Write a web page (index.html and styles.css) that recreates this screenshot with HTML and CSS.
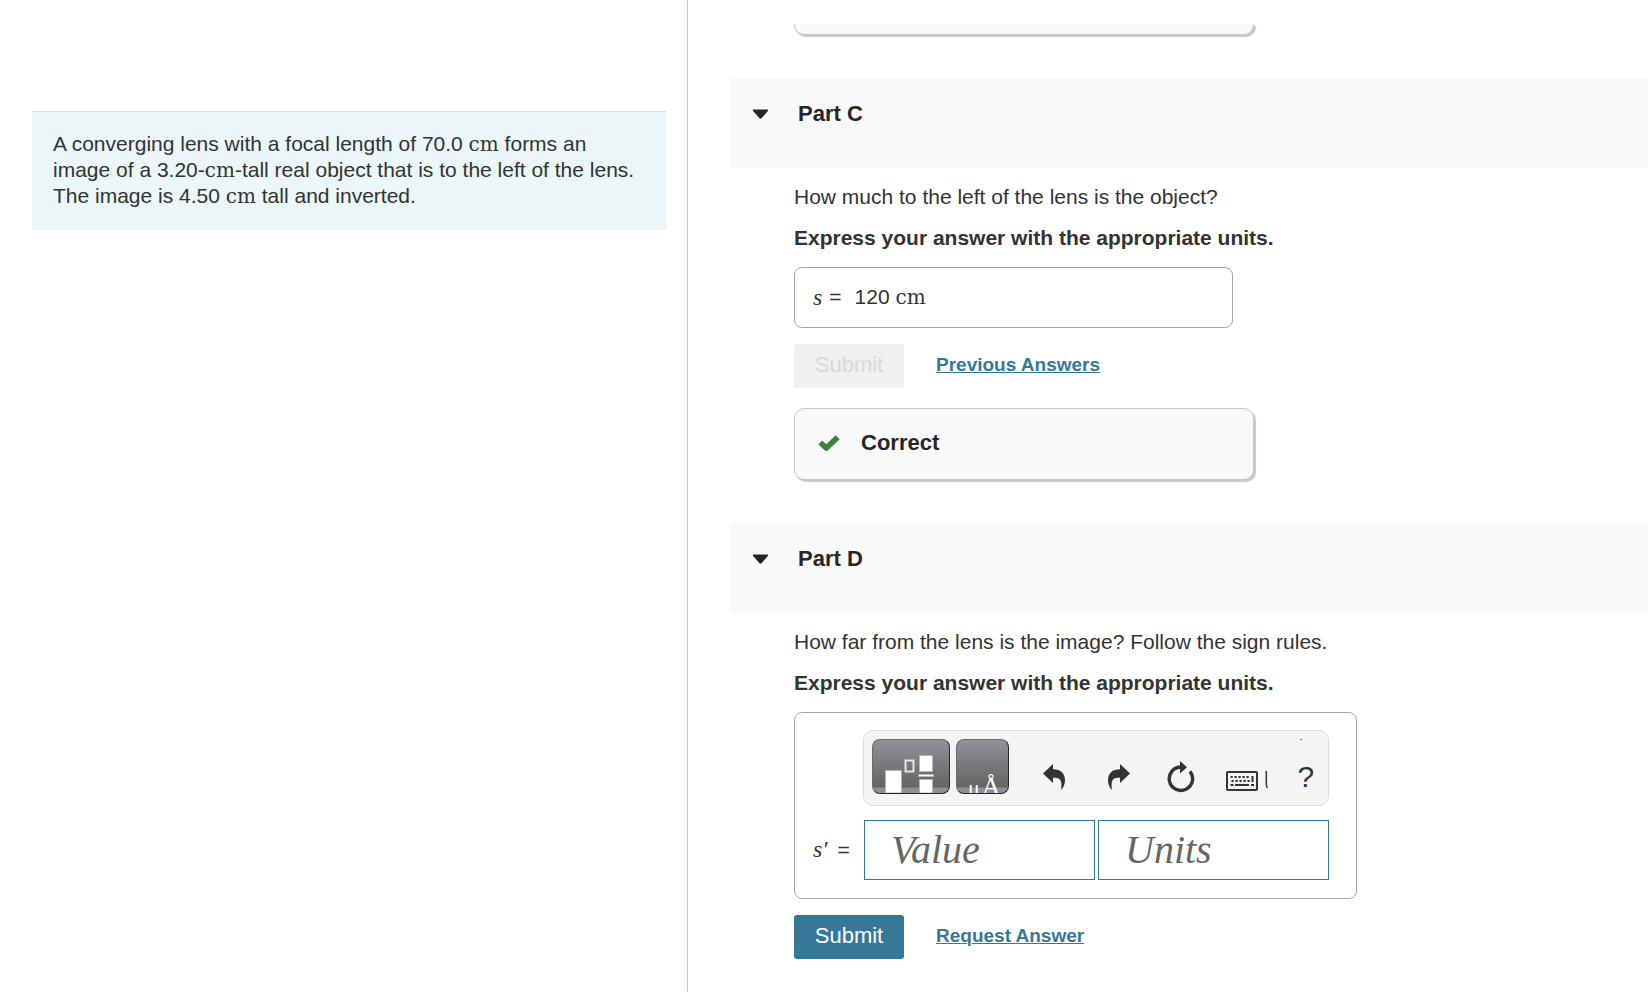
FILE: index.html
```html
<!DOCTYPE html>
<html lang="en">
<head>
<meta charset="utf-8">
<title>Converging lens problem</title>
<link rel="stylesheet" href="styles.css">
</head>
<body>
<div class="layout">
  <aside class="problem">
    <p class="problem-text">A converging lens with a focal length of 70.0 <span class="unit">cm</span> forms an image of a 3.20-<span class="unit">cm</span>-tall real object that is to the left of the lens. The image is 4.50 <span class="unit">cm</span> tall and inverted.</p>
  </aside>
  <main class="parts">
    <div class="feedback feedback-tail"></div>

    <section class="part">
      <header class="part-header">
        <svg class="caret" viewBox="0 0 17 10" aria-hidden="true"><path d="M1.5 0.5h14q1.2.5.4 1.500L9.500 9.200q-1 .9-2 0L1.100 2Q.3 1 1.500.5z"/></svg>
        <h2 class="part-title">Part C</h2>
      </header>
      <div class="part-body">
        <p class="question">How much to the left of the lens is the object?</p>
        <p class="instruction">Express your answer with the appropriate units.</p>
        <div class="answer"><i class="var">s</i><span>=</span><span class="answer-value">120 <span class="unit">cm</span></span></div>
        <div class="actions">
          <button class="submit" type="button" disabled>Submit</button>
          <a class="link" href="#previous">Previous Answers</a>
        </div>
        <div class="feedback">
          <svg class="check" viewBox="0 0 22 17" aria-hidden="true"><path d="M2.300 7.500L8.300 13 19.700 2.300" fill="none" stroke="#37833f" stroke-width="5.600" stroke-linejoin="round"/></svg>
          <strong class="feedback-text">Correct</strong>
        </div>
      </div>
    </section>

    <section class="part">
      <header class="part-header">
        <svg class="caret" viewBox="0 0 17 10" aria-hidden="true"><path d="M1.5 0.5h14q1.2.5.4 1.500L9.500 9.200q-1 .9-2 0L1.100 2Q.3 1 1.500.5z"/></svg>
        <h2 class="part-title">Part D</h2>
      </header>
      <div class="part-body">
        <p class="question">How far from the lens is the image? Follow the sign rules.</p>
        <p class="instruction">Express your answer with the appropriate units.</p>
        <form class="entry">
          <div class="toolbar">
            <button class="palette palette-templates" type="button" aria-label="Templates">
              <svg viewBox="0 0 76 53" width="76" height="53" aria-hidden="true">
                <g fill="#fff" stroke="#b5b5ba" stroke-width="1"><path d="M12.500 30.500h16V53h-16zM46.500 15.500h13v16h-13zM46.500 39.500h13V53h-13zM45.500 34.500h15v2h-15z"/></g>
                <path d="M32.500 20.500h8v11h-8z" fill="none" stroke="#e6e6ea" stroke-width="2"/>
              </svg>
            </button>
            <button class="palette palette-symbols" type="button" aria-label="Symbols"><span>μ</span><span class="angstrom">Å</span></button>
            <div class="tools">
              <button class="tool" type="button" aria-label="Undo"><svg width="22" height="26" viewBox="0 0 22 26"><path d="M0 9.500L10 0v5.200C17 5 22 9 22 16q0 6-4 10Q19.500 18 16.500 15 14 13.500 10 13.800V19z"/></svg></button>
              <button class="tool" type="button" aria-label="Redo"><svg width="22" height="26" viewBox="0 0 22 26"><path d="M22 9.500L12 0v5.200C5 5 0 9 0 16q0 6 4 10Q2.500 18 5.500 15 8 13.500 12 13.800V19z"/></svg></button>
              <button class="tool" type="button" aria-label="Reset"><svg width="28" height="32" viewBox="0 0 28 32"><path d="M14 6A11.700 11.700 0 1 0 23 10.300" fill="none" stroke="#333" stroke-width="3.400"/><path d="M13 0l7 6.300-7 6.300z"/></svg></button>
              <button class="tool" type="button" aria-label="Keyboard shortcuts"><svg width="42" height="28" viewBox="0 -8 42 28"><path d="M2 1h28q1 0 1 1v16q0 1-1 1H2q-1 0-1-1V2q0-1 1-1z" fill="none" stroke="#333" stroke-width="2"/><path d="M4.500 6h20M5.500 10h20" fill="none" stroke="#333" stroke-width="2" stroke-dasharray="2.200 1.800"/><path d="M4.500 14h3M9 14h14M25 14h3M26.500 5v6" fill="none" stroke="#333" stroke-width="2"/><path d="M40.300 0v12q0 3 1 5" fill="none" stroke="#333" stroke-width="1.500"/></svg></button>
              <button class="tool tool-help" type="button" aria-label="Help">?</button>
            </div>
          </div>
          <label class="entry-label" for="value"><span><i class="var">s</i><i class="var">′</i></span><span>=</span></label>
          <div class="fields">
            <input class="field" id="value" type="text" placeholder="Value" aria-label="Value">
            <input class="field" type="text" placeholder="Units" aria-label="Units">
          </div>
        </form>
        <div class="actions">
          <button class="submit" type="button">Submit</button>
          <a class="link" href="#request">Request Answer</a>
        </div>
      </div>
    </section>
  </main>
</div>
</body>
</html>
```
FILE: styles.css
```css
* { box-sizing: border-box; }

body {
  margin: 0;
  background: #fff;
  color: #333;
  font: 21px/26px "Liberation Sans", Arial, sans-serif;
}

h2, p { margin: 0; }

.layout {
  display: grid;
  grid-template-columns: 43fr 60fr;
  min-height: 100vh;
}

.problem {
  padding: 111px 21px 0 32px;
  border-right: 1px solid #bccbd8;
}

.problem-text {
  padding: 19px 28px 21px 21px;
  border-top: 1px solid #d5dfe3;
  background: #eaf6f8;
}

.unit {
  font-family: "DejaVu Serif", serif;
  font-size: 20px;
  line-height: 20px;
}

.var {
  font-family: "Liberation Serif", "Times New Roman", serif;
  font-size: 24px;
  line-height: 20px;
}

.parts { padding: 24px 0 32px 42px; }

.part-header {
  display: flex;
  gap: 29px;
  height: 90px;
  padding: 22px;
  background: #f9f9f9;
}

.caret {
  width: 17px;
  height: 10px;
  margin-top: 9px;
  fill: #262626;
}

.part-title {
  color: #262626;
  font-size: 22px;
  line-height: 28px;
}

.part-body { padding: 16px 20px 0 64px; }

.instruction {
  margin: 15px 0 16px;
  font-weight: bold;
}

.answer {
  display: flex;
  align-items: center;
  gap: 7px;
  max-width: 439px;
  height: 61px;
  padding: 0 18px 2px;
  border: 1px solid #a6a6a6;
  border-radius: 8px;
}

.answer-value { margin-left: 6px; }

.actions {
  display: flex;
  align-items: center;
  gap: 32px;
  margin-top: 16px;
}

.submit {
  width: 110px;
  height: 44px;
  padding: 0 0 2px;
  border: 0;
  border-radius: 3px;
  background: #36789a;
  color: #fff;
  font: 22px/26px "Liberation Sans", Arial, sans-serif;
}

.submit:disabled {
  background: #f0f0f0;
  color: #dadada;
}

.link {
  padding-bottom: 2px;
  color: #36789a;
  font-size: 19px;
  font-weight: bold;
  line-height: 24px;
  text-decoration-thickness: 1px;
}

.feedback {
  display: flex;
  align-items: center;
  gap: 21px;
  max-width: 460px;
  height: 72px;
  margin: 20px 0 43px;
  padding: 0 23px 2px;
  border: 1px solid #c8c8c8;
  border-radius: 10px;
  background: #f9f9f9;
  box-shadow: 2px 2px 1px #c8c8c8;
}

.feedback-tail {
  height: 11px;
  margin: 0 0 43px 64px;
  border-top: 0;
  border-radius: 0 0 10px 10px;
}

.check {
  width: 22px;
  height: 17px;
}

.feedback-text {
  color: #262626;
  font-size: 22px;
}

.entry {
  display: grid;
  grid-template-columns: 50px 1fr;
  row-gap: 14px;
  max-width: 563px;
  padding: 17px 27px 18px 18px;
  border: 1px solid #a6a6a6;
  border-radius: 8px;
}

.toolbar {
  position: relative;
  grid-column: 2;
  display: flex;
  gap: 6px;
  height: 76px;
  padding: 8px 0 8px 8px;
  border: 1px solid #dcdcdc;
  border-radius: 10px;
  background: #f4f4f4;
}

.toolbar::after {
  content: "";
  position: absolute;
  top: 8px;
  right: 26px;
  width: 2px;
  height: 1px;
  background: #777;
}

.palette {
  display: flex;
  height: 55px;
  padding: 0;
  border: 1px solid #6a6a6e;
  border-right-color: #262628;
  border-bottom-color: #262628;
  border-radius: 8px;
  overflow: hidden;
  background: linear-gradient(#929199 0, #646464 47px, #8f8e96 48px);
  color: #fff;
  font: 22px/93px "Liberation Serif", "Times New Roman", serif;
}

.palette-templates { width: 78px; }

.palette-symbols {
  align-items: baseline;
  gap: 2px;
  width: 53px;
  padding-left: 11px;
}

.angstrom { font-size: 26px; }

.tools {
  display: grid;
  grid-template-columns: 64fr 64fr 60fr 72fr 44fr;
  flex: 1;
  align-items: center;
  margin-left: 7px;
  padding-top: 18px;
}

.tool {
  height: 36px;
  padding: 0;
  border: 0;
  background: none;
  color: #333;
  fill: #333;
}

.tool svg {
  display: block;
  margin: auto;
}

.tool-help {
  font: 30px/36px "Liberation Sans", Arial, sans-serif;
}

.entry-label {
  display: flex;
  align-items: center;
  gap: 10px;
}

.fields {
  display: grid;
  grid-template-columns: 1fr 1fr;
  gap: 3px;
  padding-left: 1px;
}

.field {
  width: 100%;
  height: 60px;
  padding: 0 26px 2px;
  border: 1px solid #36789a;
  border-radius: 0;
  background: #fff;
  color: #333;
  font: italic 40px/46px "Liberation Serif", "Times New Roman", serif;
}

.field::placeholder {
  color: #666;
  opacity: 1;
}
```
